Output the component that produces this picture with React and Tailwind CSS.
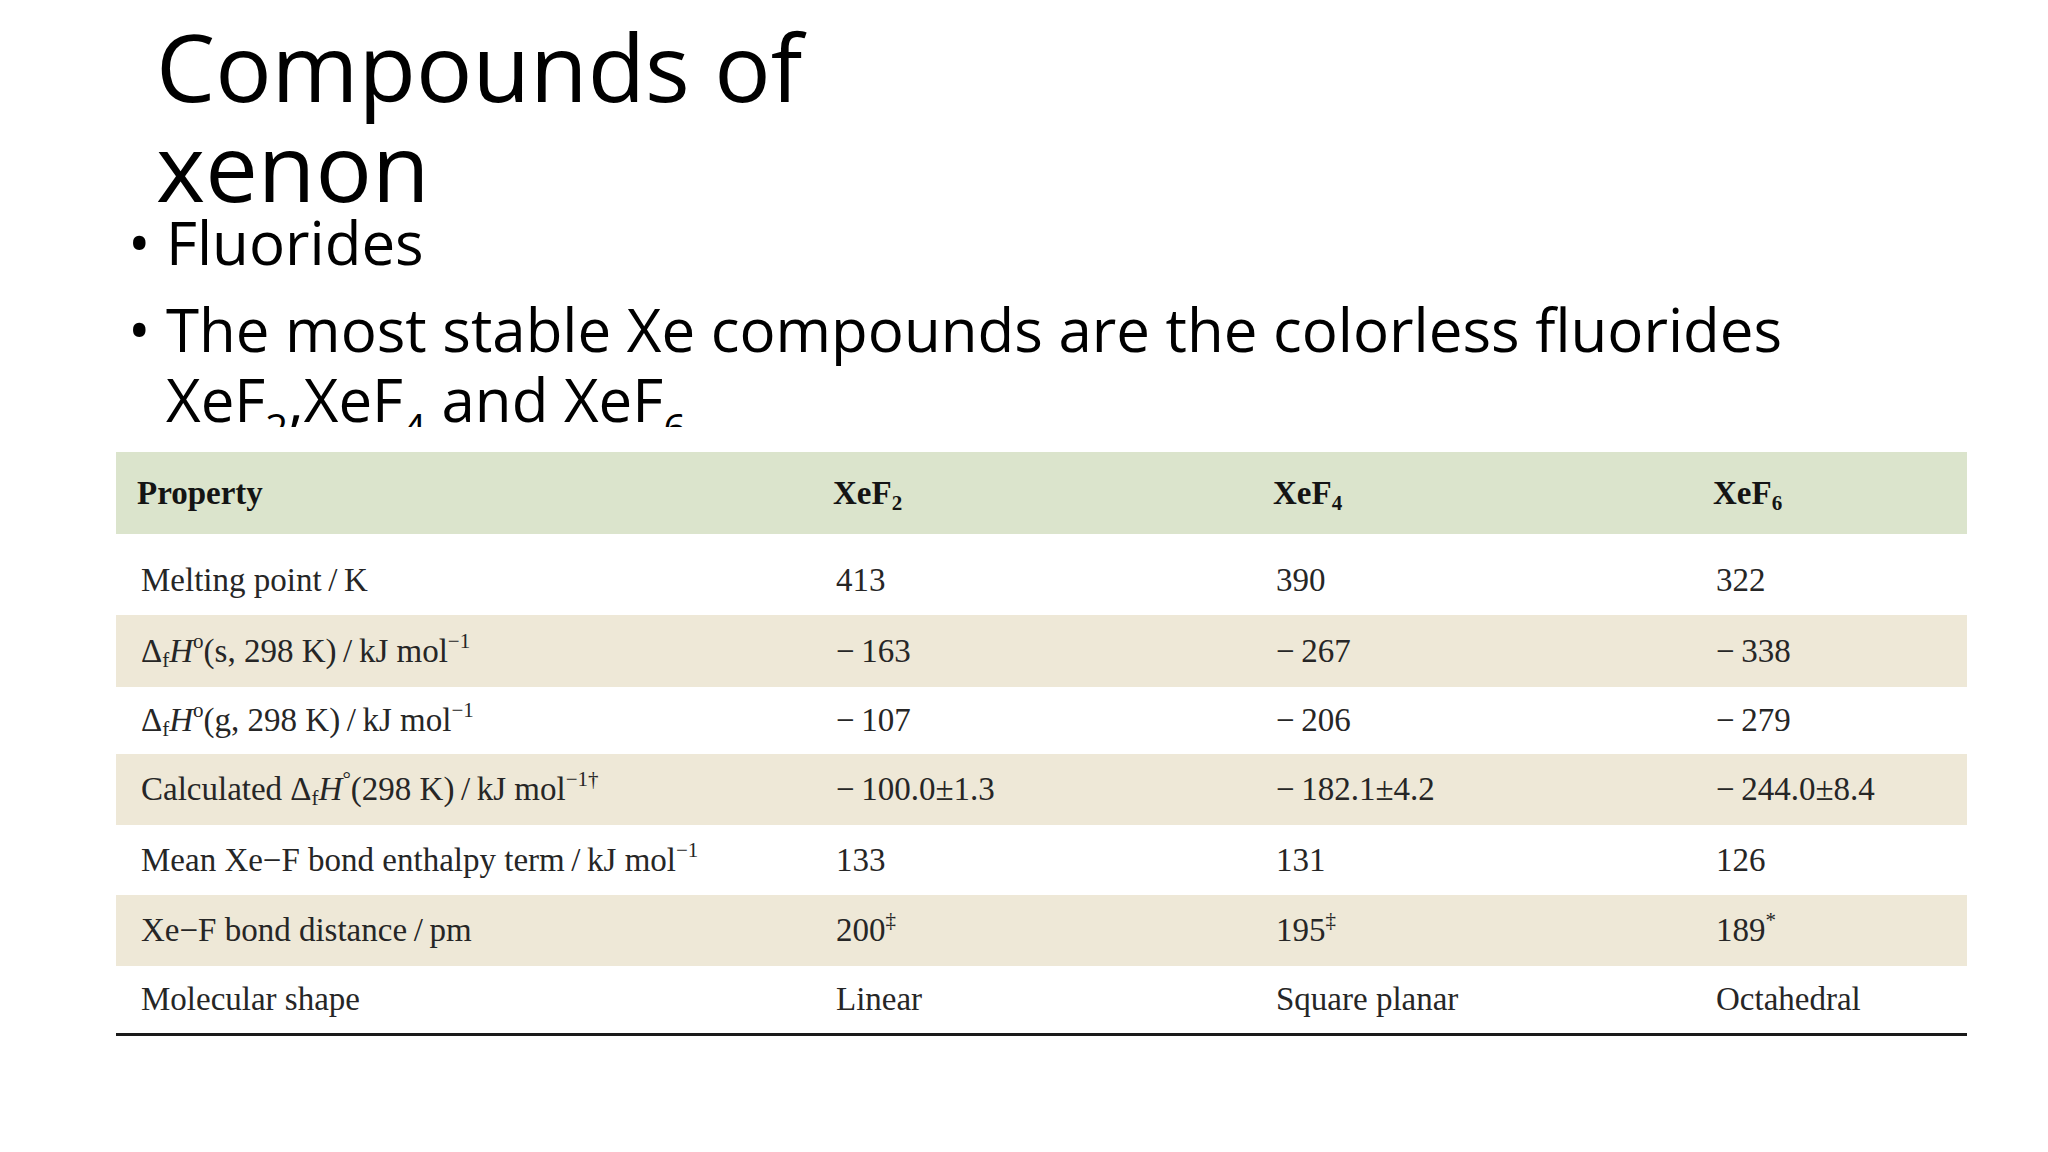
import React from "react";

const serif = { fontFamily: '"Liberation Serif", "Times New Roman", serif' };

function Sup({ children }) {
  return <sup className="text-[21px] relative top-[-14px]">{children}</sup>;
}
function Sub({ children }) {
  return <sub className="text-[21px] relative bottom-[-5px]">{children}</sub>;
}

const T = "\u2009";

const rows = [
  {
    label: <>Melting point{T}/{T}K</>,
    vals: ["413", "390", "322"],
    bg: "bg-white",
    h: "h-[81px] pt-[12px]",
  },
  {
    label: (
      <>
        Δ<Sub>f</Sub>
        <i>H</i>
        <Sup>o</Sup>(s, 298 K){T}/{T}kJ mol<Sup>−1</Sup>
      </>
    ),
    vals: [`−${T}163`, `−${T}267`, `−${T}338`],
    bg: "bg-[#eee8d7]",
    h: "h-[72px]",
  },
  {
    label: (
      <>
        Δ<Sub>f</Sub>
        <i>H</i>
        <Sup>o</Sup>(g, 298 K){T}/{T}kJ mol<Sup>−1</Sup>
      </>
    ),
    vals: [`−${T}107`, `−${T}206`, `−${T}279`],
    bg: "bg-white",
    h: "h-[67px]",
  },
  {
    label: (
      <>
        Calculated Δ<Sub>f</Sub>
        <i>H</i>
        <Sup>°</Sup>(298 K){T}/{T}kJ mol<Sup>−1†</Sup>
      </>
    ),
    vals: [`−${T}100.0±1.3`, `−${T}182.1±4.2`, `−${T}244.0±8.4`],
    bg: "bg-[#eee8d7]",
    h: "h-[71px]",
  },
  {
    label: (
      <>
        Mean Xe−F bond enthalpy term{T}/{T}kJ mol<Sup>−1</Sup>
      </>
    ),
    vals: ["133", "131", "126"],
    bg: "bg-white",
    h: "h-[70px]",
  },
  {
    label: <>Xe−F bond distance{T}/{T}pm</>,
    vals: [
      <>200<Sup>‡</Sup></>,
      <>195<Sup>‡</Sup></>,
      <>189<Sup>*</Sup></>,
    ],
    bg: "bg-[#eee8d7]",
    h: "h-[71px]",
  },
  {
    label: <>Molecular shape</>,
    vals: ["Linear", "Square planar", "Octahedral"],
    bg: "bg-white",
    h: "h-[67px]",
  },
];

const cols = "grid grid-cols-[695px_440px_440px_1fr]";

function BigSub({ children }) {
  return <sub className="text-[40px] relative bottom-auto top-[21px] align-baseline">{children}</sub>;
}

export default function App() {
  return (
    <div
      className="w-[2048px] h-[1152px] bg-white overflow-hidden text-black"
      style={{ fontFamily: '"Open Sans", "Noto Sans", sans-serif' }}
    >
      <div className="pl-[156px] pt-[16px] w-[900px]">
        <h1 className="text-[93.9px] leading-[100px] font-normal">
          Compounds of
          <br />
          xenon
        </h1>
      </div>
      <div className="mt-[-9px] h-[220px] overflow-hidden pl-[128px] pr-[100px] text-[60px] leading-[70px]">
        <div className="flex">
          <span className="w-[38px] shrink-0">•</span>
          <span>Fluorides</span>
        </div>
        <div className="flex mt-[17px]">
          <span className="w-[38px] shrink-0">•</span>
          <span>
            The most stable Xe compounds are the colorless fluorides
            <br />
            XeF<BigSub>2</BigSub>,XeF<BigSub>4</BigSub> and XeF<BigSub>6</BigSub>
          </span>
        </div>
      </div>
      <div className="ml-[116px] mt-[25px] w-[1851px] text-[33px] leading-none text-[#262626]" style={serif}>
        <div className={`${cols} h-[82px] items-center bg-[#dbe4cc] font-bold text-[#141414]`}>
          <div className="pl-[21px]">Property</div>
          <div className="pl-[22px]">
            XeF<sub className="text-[21px] relative bottom-[-6px]">2</sub>
          </div>
          <div className="pl-[22px]">
            XeF<sub className="text-[21px] relative bottom-[-6px]">4</sub>
          </div>
          <div className="pl-[22px]">
            XeF<sub className="text-[21px] relative bottom-[-6px]">6</sub>
          </div>
        </div>
        {rows.map((r, i) => (
          <div key={i} className={`${cols} items-center ${r.bg} ${r.h}`}>
            <div className="pl-[25px] whitespace-nowrap">{r.label}</div>
            {r.vals.map((v, j) => (
              <div key={j} className="pl-[25px] whitespace-nowrap">
                {v}
              </div>
            ))}
          </div>
        ))}
        <div className="h-[3px] bg-[#1a1a1a]" />
      </div>
    </div>
  );
}
